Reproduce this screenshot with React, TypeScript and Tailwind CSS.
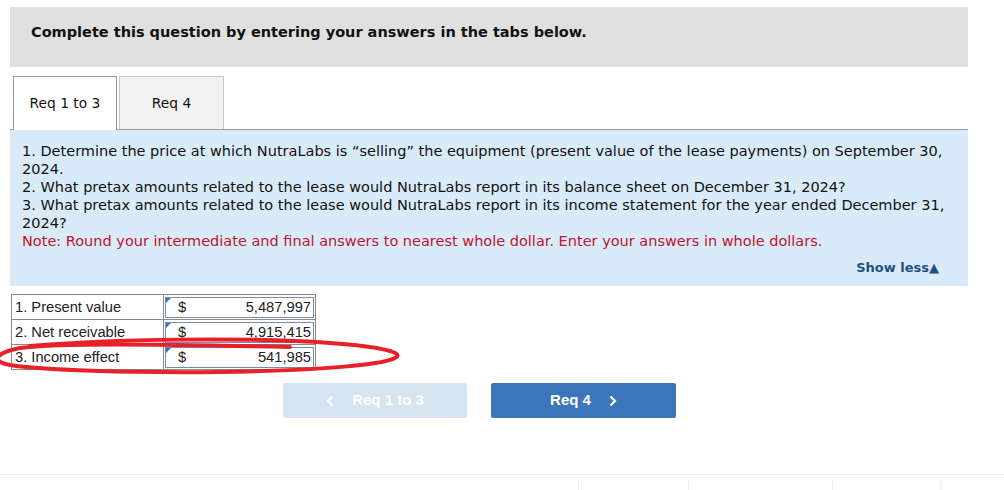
const verdana = { fontFamily: '"DejaVu Sans", Verdana, sans-serif' };

type Row = { label: string; value: string };

const rows: Row[] = [
  { label: "1. Present value", value: "5,487,997" },
  { label: "2. Net receivable", value: "4,915,415" },
  { label: "3. Income effect", value: "541,985" },
];

function Chevron({ dir }: { dir: "left" | "right" }) {
  return (
    <svg width="8" height="12" viewBox="0 0 8 12" className="shrink-0">
      <path
        d={dir === "left" ? "M6.5 1.5 L2 6 L6.5 10.5" : "M1.5 1.5 L6 6 L1.5 10.5"}
        fill="none"
        stroke="white"
        strokeWidth="2.2"
      />
    </svg>
  );
}

function AnswerTable() {
  return (
    <table className="ml-[11px] border-collapse font-['Liberation_Sans',Arial,sans-serif] text-[14.7px] text-[#222]">
      <tbody>
        {rows.map((r) => (
          <tr key={r.label} className="h-[25px]">
            <td className="w-[152px] border border-[#8a8a8a] pl-[3px] leading-none">{r.label}</td>
            <td className="w-[152px] border border-[#8a8a8a] p-0">
              <div className="relative mx-[1px] flex h-[21px] items-center border border-[#6f8db5] bg-white pr-[2px] leading-none">
                <span className="absolute left-0 top-0 h-0 w-0 border-r-[5px] border-t-[5px] border-r-transparent border-t-[#3b73c4]" />
                <span className="pl-[12px]">$</span>
                <span className="ml-auto">{r.value}</span>
              </div>
            </td>
          </tr>
        ))}
      </tbody>
    </table>
  );
}

export default function App() {
  return (
    <div className="relative h-[490px] w-[1004px] overflow-hidden bg-white" style={verdana}>
      <div className="pt-[7px]">
        <div className="ml-[10px] flex h-[60px] w-[958px] items-center bg-[#e0e0e0] pb-[8px] pl-[21px]">
          <p className="text-[14.5px] font-bold text-[#111]">
            Complete this question by entering your answers in the tabs below.
          </p>
        </div>

        <div className="ml-[13px] mt-[9px] flex w-[955px] items-end gap-[2px]">
          <div className="relative z-10 -mb-px flex h-[54px] w-[104px] items-center justify-center border border-b-0 border-[#9a9a9a] bg-white text-[13.8px] text-[#111]">
            Req 1 to 3
          </div>
          <div className="flex h-[53px] w-[105px] items-center justify-center border border-b-0 border-[#c8c8c8] bg-[#f2f2f2] text-[13.8px] text-[#111]">
            Req 4
          </div>
          <div className="flex-1" />
        </div>

        <div className="ml-[10px] w-[958px] border-t border-[#999] bg-[#d9ebf9] px-[12px] pb-[12px] pt-[12px] text-[14.5px] leading-[18px] text-[#111]">
          <p>
            1. Determine the price at which NutraLabs is “selling” the equipment (present value of the lease payments) on September 30, 2024.
          </p>
          <p>2. What pretax amounts related to the lease would NutraLabs report in its balance sheet on December 31, 2024?</p>
          <p>
            3. What pretax amounts related to the lease would NutraLabs report in its income statement for the year ended December 31, 2024?
          </p>
          <p className="text-[#c0142b]">
            Note: Round your intermediate and final answers to nearest whole dollar. Enter your answers in whole dollars.
          </p>
          <div className="mt-[11px] flex justify-end pr-[17px]">
            <span className="text-[13px] font-bold leading-none text-[#1f4f80]">Show less▲</span>
          </div>
        </div>

        <div className="mt-[8px]">
          <AnswerTable />
        </div>

        <div className="ml-[283px] mt-[13px] flex gap-[24px] font-['Liberation_Sans',Arial,sans-serif] text-[15px] font-bold text-white">
          <button type="button" className="flex h-[35px] w-[184px] items-center justify-center gap-[18px] rounded-[2px] bg-[#d6e3f1]">
            <Chevron dir="left" />
            Req 1 to 3
          </button>
          <button type="button" className="flex h-[35px] w-[185px] items-center justify-center gap-[18px] rounded-[2px] bg-[#3a76b9]">
            Req 4
            <Chevron dir="right" />
          </button>
        </div>
      </div>

      <svg className="pointer-events-none absolute left-0 top-[335px]" width="410" height="44" viewBox="0 0 410 44">
        <path
          d="M30 11 C 110 4, 250 2, 330 8 C 385 12, 405 18, 395 23 C 380 31, 300 36, 220 37 C 130 38, 40 35, 10 30 C -10 26, -5 18, 20 13 C 60 8, 150 9, 290 12"
          fill="none"
          stroke="#e8202a"
          strokeWidth="4"
          strokeLinecap="round"
        />
      </svg>

      <div className="absolute left-0 top-[474px] h-px w-full bg-[#eeeeee]" />
      <div className="absolute left-[578px] top-[480px] h-[10px] w-px bg-[#eeeeee]" />
      <div className="absolute left-[688px] top-[480px] h-[10px] w-px bg-[#eeeeee]" />
      <div className="absolute left-[832px] top-[480px] h-[10px] w-px bg-[#eeeeee]" />
      <div className="absolute left-[940px] top-[480px] h-[10px] w-px bg-[#eeeeee]" />
    </div>
  );
}
